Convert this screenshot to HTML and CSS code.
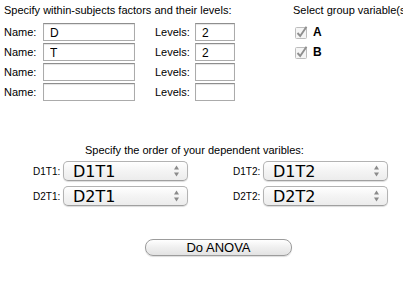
FILE: index.html
```html
<!DOCTYPE html>
<html>
  <head>
    <title>ANOVA</title>
    <link rel="stylesheet" href="styles.css">
  </head>
  <body>
    <div class="top">
      <div class="factors">
        <p class="section-title">Specify within-subjects factors and their levels:</p>
        <div class="factor-row">
          <span class="name-label">Name:</span>
          <input class="name-input" type="text" value="D">
          <span class="levels-label">Levels:</span>
          <input class="levels-input" type="text" value="2">
        </div>
        <div class="factor-row">
          <span class="name-label">Name:</span>
          <input class="name-input" type="text" value="T">
          <span class="levels-label">Levels:</span>
          <input class="levels-input" type="text" value="2">
        </div>
        <div class="factor-row">
          <span class="name-label">Name:</span>
          <input class="name-input" type="text" value="">
          <span class="levels-label">Levels:</span>
          <input class="levels-input" type="text" value="">
        </div>
        <div class="factor-row">
          <span class="name-label">Name:</span>
          <input class="name-input" type="text" value="">
          <span class="levels-label">Levels:</span>
          <input class="levels-input" type="text" value="">
        </div>
      </div>

      <div class="groups">
        <p class="section-title">Select group variable(s)</p>
        <div class="group-item">
          <svg class="check" width="13" height="13" viewBox="0 0 13 13">
            <rect x="0.5" y="1.5" width="11" height="11" rx="1" fill="#f5f5f5" stroke="#bdbdbd"/>
            <path d="M2.5 7 L5.2 10 L11.5 0.8" fill="none" stroke="#8f8f8f" stroke-width="1.9"/>
          </svg>
          <span class="group-name">A</span>
        </div>
        <div class="group-item">
          <svg class="check" width="13" height="13" viewBox="0 0 13 13">
            <rect x="0.5" y="1.5" width="11" height="11" rx="1" fill="#f5f5f5" stroke="#bdbdbd"/>
            <path d="M2.5 7 L5.2 10 L11.5 0.8" fill="none" stroke="#8f8f8f" stroke-width="1.9"/>
          </svg>
          <span class="group-name">B</span>
        </div>
      </div>
    </div>

    <div class="order">
      <p class="order-title">Specify the order of your dependent varibles:</p>
      <div class="order-grid">
        <div class="order-cell">
          <span class="cell-label">D1T1:</span>
          <div class="popup"><span>D1T1</span>
            <svg class="arrows" width="7" height="12" viewBox="0 0 7 12"><path d="M3.5 0.5 L6 4.5 L1 4.5 Z M1 7.5 L6 7.5 L3.5 11.5 Z" fill="#8a8a8a"/></svg>
          </div>
        </div>
        <div class="order-cell">
          <span class="cell-label">D1T2:</span>
          <div class="popup"><span>D1T2</span>
            <svg class="arrows" width="7" height="12" viewBox="0 0 7 12"><path d="M3.5 0.5 L6 4.5 L1 4.5 Z M1 7.5 L6 7.5 L3.5 11.5 Z" fill="#8a8a8a"/></svg>
          </div>
        </div>
        <div class="order-cell">
          <span class="cell-label">D2T1:</span>
          <div class="popup"><span>D2T1</span>
            <svg class="arrows" width="7" height="12" viewBox="0 0 7 12"><path d="M3.5 0.5 L6 4.5 L1 4.5 Z M1 7.5 L6 7.5 L3.5 11.5 Z" fill="#8a8a8a"/></svg>
          </div>
        </div>
        <div class="order-cell">
          <span class="cell-label">D2T2:</span>
          <div class="popup"><span>D2T2</span>
            <svg class="arrows" width="7" height="12" viewBox="0 0 7 12"><path d="M3.5 0.5 L6 4.5 L1 4.5 Z M1 7.5 L6 7.5 L3.5 11.5 Z" fill="#8a8a8a"/></svg>
          </div>
        </div>
      </div>
    </div>

    <div class="actions">
      <button class="run-button">Do ANOVA</button>
    </div>
  </body>
</html>
```

FILE: styles.css
```css
body {
    margin: 0;
    background-color: white;
    color: black;
    font-family: "Liberation Sans", Arial, sans-serif;
    font-size: 11px;
    width: 403px;
    height: 286px;
    overflow: hidden;
}

p {
    margin: 0;
}

.top {
    display: flex;
    padding: 3px 0 0 4px;
}

.factors {
    width: 289px;
    flex-shrink: 0;
}

.section-title {
    height: 19px;
    line-height: 15px;
    white-space: nowrap;
}

.factor-row {
    display: flex;
    align-items: center;
    height: 20px;
}

.name-label {
    width: 39px;
}

.levels-label {
    width: 40px;
    margin-left: 20px;
}

input {
    box-sizing: border-box;
    height: 18px;
    margin: 0;
    padding: 1px 6px 0;
    border: 1px solid #ababab;
    border-top-color: #8e8e8e;
    box-shadow: inset 0 1px 1px #e4e4e4;
    font-family: "Liberation Sans", Arial, sans-serif;
    font-size: 12px;
    color: black;
    background: white;
    outline: none;
}

.name-input {
    width: 92px;
}

.levels-input {
    width: 40px;
}

.groups {
    white-space: nowrap;
}

.group-item {
    display: flex;
    align-items: center;
    height: 20px;
    padding-left: 2px;
}

.group-name {
    margin-left: 5px;
    font-size: 12px;
    font-weight: bold;
}

.order {
    margin-top: 41px;
}

.order-title {
    line-height: 15px;
    padding-left: 85px;
    margin-bottom: 3px;
}

.order-grid {
    display: grid;
    grid-template-columns: 155px 155px;
    column-gap: 45px;
    row-gap: 5px;
    padding-left: 33px;
}

.order-cell {
    display: flex;
    align-items: center;
    justify-content: space-between;
}

.cell-label {
    font-size: 10px;
}

.popup {
    box-sizing: border-box;
    width: 125px;
    height: 20px;
    display: flex;
    align-items: center;
    justify-content: space-between;
    padding: 0 7px 0 9px;
    border: 1px solid #b3b3b3;
    border-bottom-color: #a0a0a0;
    border-radius: 5px;
    background: linear-gradient(#ffffff, #f4f4f4 50%, #ececec);
    box-shadow: 0 1px 1px #dcdcdc;
    font-family: "DejaVu Sans", sans-serif;
    font-size: 16px;
}

.actions {
    margin-top: 33px;
    padding-left: 145px;
}

.run-button {
    display: block;
    box-sizing: border-box;
    width: 147px;
    height: 17px;
    padding: 0;
    border: 1px solid #9c9c9c;
    border-radius: 8px;
    background: linear-gradient(#ffffff, #efefef 50%, #e3e3e3);
    box-shadow: 0 1px 1px #dddddd;
    font-family: "Liberation Sans", Arial, sans-serif;
    font-size: 13px;
    line-height: 15px;
    color: black;
    cursor: pointer;
}
```
